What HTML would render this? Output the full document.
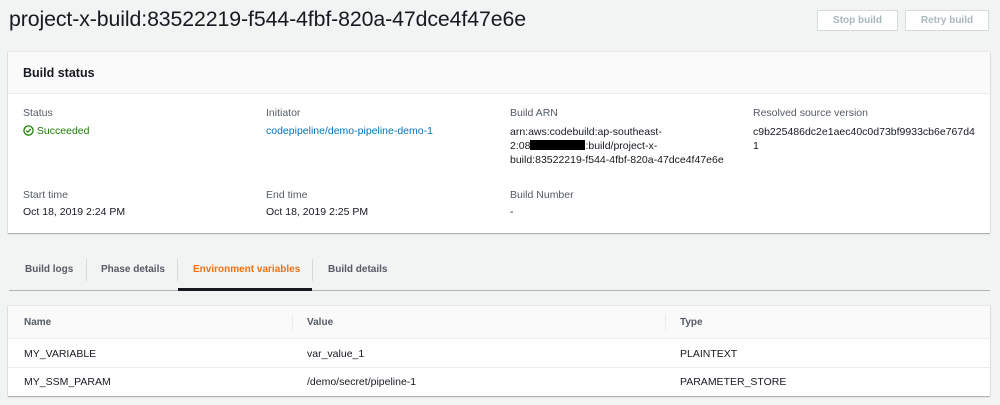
<!DOCTYPE html>
<html><head><style>
*{margin:0;padding:0;box-sizing:border-box}
body{width:1000px;height:405px;background:#f2f3f3;font-family:"Liberation Sans",sans-serif;color:#16191f;position:relative;overflow:hidden;font-size:10.5px}
.abs{position:absolute;white-space:nowrap}
h1{position:absolute;left:9px;top:7px;font-size:21.3px;font-weight:400;letter-spacing:-0.1px}
.btn{position:absolute;top:10px;height:21px;border:1px solid #d5dbdb;background:#fff;color:#aab7b8;font-weight:700;font-size:10px;text-align:center;line-height:19px}
.card{position:absolute;left:8px;width:982px;background:#fff;box-shadow:0 1px 1px rgba(0,0,0,.3),0 0 1px rgba(0,0,0,.2)}
.lbl{color:#545b64}
.lnk{color:#0073bb}
.tab{position:absolute;top:264px;font-weight:700;color:#545b64;font-size:10px}
.sep{position:absolute;top:259px;width:1px;height:22px;background:#d5dbdb}
.th{font-weight:700;color:#545b64;font-size:10px}
</style></head><body>
<h1>project-x-build:83522219-f544-4fbf-820a-47dce4f47e6e</h1>
<div class="btn" style="left:817px;width:81px">Stop build</div>
<div class="btn" style="left:905px;width:84px">Retry build</div>

<div class="card" style="top:52px;height:181px">
  <div style="height:42px;background:#fafafa;border-bottom:1px solid #eaeded"></div>
</div>
<div class="abs" style="left:23px;top:66px;font-weight:700;font-size:12.5px">Build status</div>

<div class="abs lbl" style="left:23px;top:107px">Status</div>
<div class="abs" style="left:23px;top:125px;color:#1d8102">
<svg width="11" height="11" viewBox="0 0 12 12" style="vertical-align:-2px"><circle cx="6" cy="6" r="5" fill="none" stroke="#1d8102" stroke-width="1.4"/><path d="M3.5 6.2l1.7 1.6 3.3-3.4" fill="none" stroke="#1d8102" stroke-width="1.4"/></svg> Succeeded</div>
<div class="abs lbl" style="left:266px;top:107px">Initiator</div>
<div class="abs lnk" style="left:266px;top:125px">codepipeline/demo-pipeline-demo-1</div>
<div class="abs lbl" style="left:510px;top:107px">Build ARN</div>
<div class="abs" style="left:510px;top:125px;line-height:14px">arn:aws:codebuild:ap-southeast-<br>2:08<span style="display:inline-block;width:55px;height:10px;background:#000;vertical-align:-1px"></span>:build/project-x-<br>build:83522219-f544-4fbf-820a-47dce4f47e6e</div>
<div class="abs lbl" style="left:753px;top:107px">Resolved source version</div>
<div class="abs" style="left:753px;top:125px;line-height:14px">c9b225486dc2e1aec40c0d73bf9933cb6e767d4<br>1</div>

<div class="abs lbl" style="left:23px;top:189px">Start time</div>
<div class="abs" style="left:23px;top:206px">Oct 18, 2019 2:24 PM</div>
<div class="abs lbl" style="left:266px;top:189px">End time</div>
<div class="abs" style="left:266px;top:206px">Oct 18, 2019 2:25 PM</div>
<div class="abs lbl" style="left:510px;top:189px">Build Number</div>
<div class="abs" style="left:510px;top:206px">-</div>

<div class="tab" style="left:25px">Build logs</div>
<div class="sep" style="left:86px"></div>
<div class="tab" style="left:101px">Phase details</div>
<div class="sep" style="left:177px"></div>
<div class="tab" style="left:193px;color:#ec7211">Environment variables</div>
<div class="sep" style="left:312px"></div>
<div class="tab" style="left:328px">Build details</div>
<div style="position:absolute;left:9px;top:290px;width:981px;height:1px;background:#aab7b8"></div>
<div style="position:absolute;left:178px;top:288px;width:134px;height:3px;background:#16191f"></div>

<div class="card" style="top:306px;height:90px">
  <div style="height:33px;background:#fafafa;border-bottom:1px solid #eaeded"></div>
  <div style="height:29px;border-bottom:1px solid #eaeded"></div>
</div>
<div style="position:absolute;left:292px;top:314px;width:1px;height:17px;background:#eaeded"></div>
<div style="position:absolute;left:665px;top:314px;width:1px;height:17px;background:#eaeded"></div>
<div class="abs th" style="left:24px;top:317px">Name</div>
<div class="abs th" style="left:307px;top:317px">Value</div>
<div class="abs th" style="left:680px;top:317px">Type</div>
<div class="abs" style="left:24px;top:348px">MY_VARIABLE</div>
<div class="abs" style="left:307px;top:348px">var_value_1</div>
<div class="abs" style="left:680px;top:348px">PLAINTEXT</div>
<div class="abs" style="left:24px;top:376px">MY_SSM_PARAM</div>
<div class="abs" style="left:307px;top:376px">/demo/secret/pipeline-1</div>
<div class="abs" style="left:680px;top:376px">PARAMETER_STORE</div>
</body></html>
